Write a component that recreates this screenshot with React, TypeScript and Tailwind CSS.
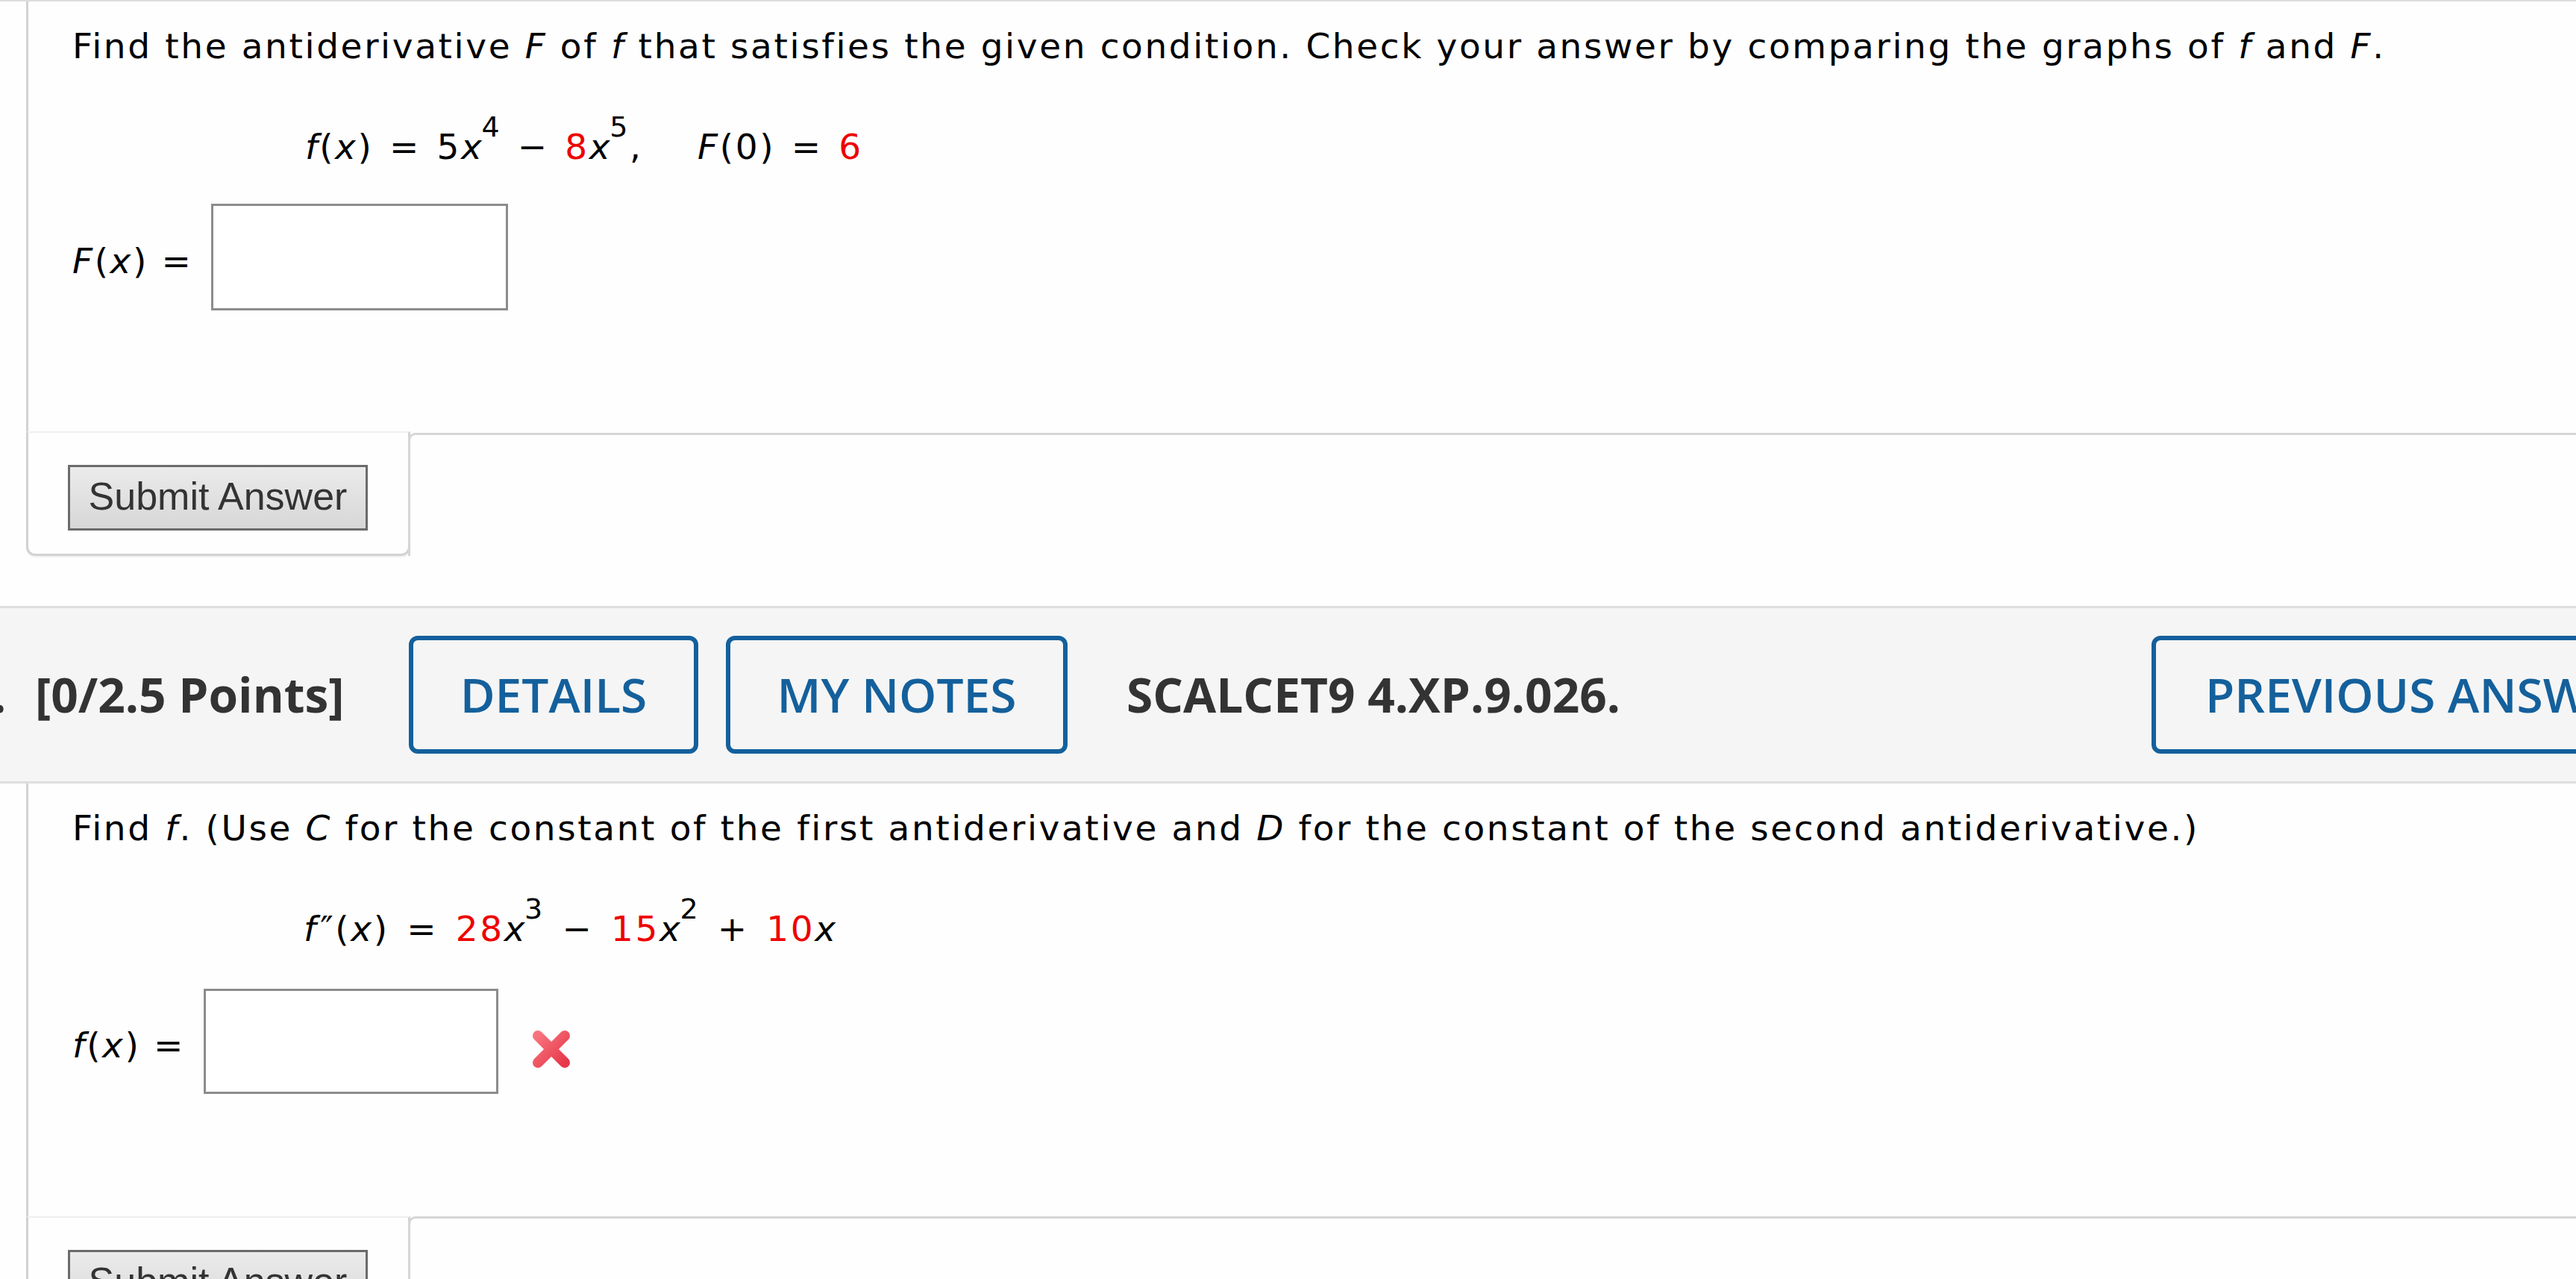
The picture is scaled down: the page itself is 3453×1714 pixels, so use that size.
import type { ReactNode } from "react"

const red = "text-[#ee0000]"

function Sup({ children }: { children: ReactNode }) {
    return <sup className="text-[38px] top-[-30px] -ml-[3px]">{children}</sup>
}

function AnswerBox({ w, h }: { w: string; h: string }) {
    return <div className={`${w} ${h} shrink-0 border-[3px] border-[#8c8c8c] bg-white`} />
}

function XMark() {
    return (
        <svg width="58" height="58" viewBox="0 0 58 58" className="shrink-0">
            <defs>
                <linearGradient id="xg" x1="0" y1="0" x2="1" y2="1">
                    <stop offset="0" stopColor="#f7737d" />
                    <stop offset="1" stopColor="#e6394a" />
                </linearGradient>
            </defs>
            <path d="M11 11 L47 47 M47 11 L11 47" stroke="url(#xg)" strokeWidth="14" strokeLinecap="round" />
        </svg>
    )
}

function SubmitRow({ top }: { top: string }) {
    return (
        <div className="flex">
            <div className="ml-[35px] w-[515px] h-[167px] shrink-0 border-x-[3px] border-b-[3px] border-t-2 border-[#d2d2d2] border-t-[#efefef] rounded-b-[12px] pt-[43px] pl-[53px] shadow-[0_2px_2px_rgba(0,0,0,0.06)]">
                <button className="w-[402px] h-[88px] border-[3px] border-[#6b6b6b] bg-gradient-to-b from-[#ebebeb] to-[#d7d7d7] text-[#333] text-[52px] leading-none font-['Liberation_Sans',Arial,sans-serif] pb-[4px]">
                    Submit Answer
                </button>
            </div>
            <div className={`flex-1 ${top} border-t-[3px] border-l-[3px] border-[#d6d6d6] rounded-tl-[10px] -ml-[3px]`} />
        </div>
    )
}

export default function App() {
    return (
        <div className="w-[3453px] h-[1714px] overflow-hidden bg-[#fefefe] text-black font-['DejaVu_Sans',Verdana,sans-serif]">
            <div className="h-[2px] bg-[#dcdcdc]" />

            {/* question 1 */}
            <div className="ml-[35px] border-l-[3px] border-[#d2d2d2] h-[576px] pl-[59px] pt-[25px] text-[47px] leading-[69px] tracking-[2.6px] whitespace-nowrap">
                <p>
                    Find the antiderivative <i>F</i> of <i>f</i> that satisfies the given condition. Check your answer by comparing the graphs of <i>f</i> and <i>F</i>.
                </p>
                <p className="mt-[66px] ml-[312px] [word-spacing:4px]">
                    <i>f</i>(<i>x</i>) = 5<i>x</i><Sup>4</Sup> − <span className={red}>8</span><i>x</i><Sup>5</Sup>,
                    <span className="inline-block w-[52px]" /> <i>F</i>(0) = <span className={red}>6</span>
                </p>
                <div className="mt-[42px] flex items-center">
                    <span className="w-[186px] shrink-0 mt-[10px]"><i>F</i>(<i>x</i>) =</span>
                    <AnswerBox w="w-[398px]" h="h-[143px]" />
                </div>
            </div>
            <SubmitRow top="mt-[2px]" />

            {/* header of question 2 */}
            <div className="mt-[67px] h-[238px] bg-[#f5f5f5] border-y-[3px] border-[#dedede] flex items-center overflow-hidden whitespace-nowrap font-['Open_Sans',sans-serif] text-[64px] leading-none">
                <div className="w-[47px] shrink-0 indent-[-10px] font-bold text-[#333]">.</div>
                <div className="w-[501px] shrink-0 font-bold text-[#333]">[0/2.5 Points]</div>
                <button className="w-[388px] h-[158px] shrink-0 border-[6px] border-[#14609c] rounded-[12px] text-[#14609c] font-semibold">DETAILS</button>
                <button className="ml-[37px] w-[458px] h-[158px] shrink-0 border-[6px] border-[#14609c] rounded-[12px] text-[#14609c] font-semibold">MY NOTES</button>
                <div className="ml-[79px] w-[1374px] shrink-0 font-bold text-[#333]">SCALCET9 4.XP.9.026.</div>
                <button className="h-[158px] shrink-0 border-[6px] border-[#14609c] rounded-[12px] text-[#14609c] font-semibold pl-[66px] pr-[66px] text-left">PREVIOUS ANSWERS</button>
            </div>

            {/* question 2 */}
            <div className="ml-[35px] border-l-[3px] border-[#d2d2d2] h-[580px] pl-[59px] pt-[25px] text-[47px] leading-[69px] tracking-[2.6px] whitespace-nowrap">
                <p>
                    Find <i>f</i>. (Use <i>C</i> for the constant of the first antiderivative and <i>D</i> for the constant of the second antiderivative.)
                </p>
                <p className="mt-[66px] ml-[310px] [word-spacing:6px]">
                    <i>f</i><span className="ml-[3px]">″</span>(<i>x</i>) = <span className={red}>28</span><i>x</i><Sup>3</Sup> − <span className={red}>15</span><i>x</i><Sup>2</Sup> + <span className={red}>10</span><i>x</i>
                </p>
                <div className="mt-[46px] flex items-center">
                    <span className="w-[176px] shrink-0 mt-[10px]"><i>f</i>(<i>x</i>) =</span>
                    <AnswerBox w="w-[395px]" h="h-[141px]" />
                    <div className="ml-[42px] mt-[20px]"><XMark /></div>
                </div>
            </div>
            <SubmitRow top="mt-[0px]" />
        </div>
    )
}
